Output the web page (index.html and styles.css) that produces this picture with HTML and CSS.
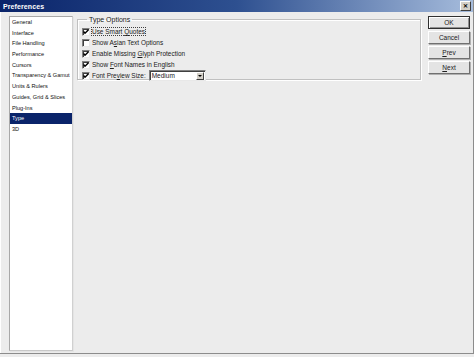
FILE: index.html
```html
<!DOCTYPE html>
<html lang="en">
<head>
    <meta charset="UTF-8">
    <title>Preferences</title>
    <link rel="stylesheet" href="styles.css">
</head>
<body>
    <div class="window">
        <div class="titlebar">
            <span class="title">Preferences</span>
            <span class="close">&#x2715;</span>
        </div>
        <div class="content">
            <ul class="nav">
                <li>General</li>
                <li>Interface</li>
                <li>File Handling</li>
                <li>Performance</li>
                <li>Cursors</li>
                <li>Transparency &amp; Gamut</li>
                <li>Units &amp; Rulers</li>
                <li>Guides, Grid &amp; Slices</li>
                <li>Plug-Ins</li>
                <li class="selected">Type</li>
                <li>3D</li>
            </ul>

            <fieldset class="group">
                <legend>Type Options</legend>
                <label class="check"><span class="box"><svg viewBox="0 0 6 6"><polyline points="0.5,2.5 2,4.2 5.5,0.8"/></svg></span><span class="focus">Use Smart <u>Q</u>uotes</span></label>
                <label class="check"><span class="box"></span><span>Show A<u>s</u>ian Text Options</span></label>
                <label class="check"><span class="box"><svg viewBox="0 0 6 6"><polyline points="0.5,2.5 2,4.2 5.5,0.8"/></svg></span><span>Enable Missing <u>G</u>lyph Protection</span></label>
                <label class="check"><span class="box"><svg viewBox="0 0 6 6"><polyline points="0.5,2.5 2,4.2 5.5,0.8"/></svg></span><span>Show <u>F</u>ont Names in English</span></label>
                <label class="check"><span class="box"><svg viewBox="0 0 6 6"><polyline points="0.5,2.5 2,4.2 5.5,0.8"/></svg></span><span>Font Pre<u>v</u>iew Size:</span>
                    <span class="select"><span class="value">Medium</span><span class="arrow"></span></span>
                </label>
            </fieldset>

            <div class="buttons">
                <button class="default">OK</button>
                <button>Cancel</button>
                <button><u>P</u>rev</button>
                <button><u>N</u>ext</button>
            </div>
        </div>
    </div>
</body>
</html>
```

FILE: styles.css
```css
html, body {
    margin: 0;
    padding: 0;
}
body {
    width: 474px;
    height: 357px;
    overflow: hidden;
    background: #ececec;
    font-family: "Liberation Sans", Arial, sans-serif;
    color: #000;
}
.window {
    height: 354px;
    border-bottom: 1px solid #8c8c8c;
    border-right: 1px solid #8c8c8c;
    box-sizing: border-box;
    display: flex;
    flex-direction: column;
}
.titlebar {
    height: 12px;
    background: linear-gradient(to right, #0a246a 0%, #2e5090 50%, #a6bcdc 100%);
    display: flex;
    align-items: center;
    justify-content: space-between;
    padding: 0 2px 0 3px;
}
.title {
    color: #fff;
    font-weight: bold;
    font-size: 7px;
    letter-spacing: 0.1px;
}
.close {
    width: 9px;
    height: 8px;
    background: #d4d0c8;
    border: 1px solid;
    border-color: #fff #404040 #404040 #fff;
    font-size: 6px;
    font-weight: bold;
    line-height: 8px;
    text-align: center;
    color: #000;
}
.content {
    flex: 1;
    display: flex;
    align-items: flex-start;
    padding: 4px 3px 0 8px;
    border-left: 1px solid #fff;
}
.nav {
    list-style: none;
    margin: 0;
    padding: 0;
    width: 64px;
    height: 335px;
    box-sizing: border-box;
    background: #fff;
    border: 1px solid #a8a8a8;
    border-right-color: #d0d0d0;
    border-bottom-color: #c8c8c8;
    box-shadow: 1px 1px 0 #e4e4e4;
}
.nav li {
    height: 10.7px;
    line-height: 10.7px;
    font-size: 5.6px;
    padding-left: 2px;
    white-space: nowrap;
    color: #101010;
}
.nav li.selected {
    background: #0a246a;
    color: #fff;
}
.group {
    margin: 0 0 0 4px;
    width: 344px;
    height: 64px;
    box-sizing: border-box;
    border: 1px solid #c0c0c0;
    box-shadow: inset 1px 1px 0 #fff, 1px 1px 0 #fff;
    padding: 3px 0 0 4px;
}
.group legend {
    font-size: 7px;
    padding: 0 2px;
    margin-left: 5px;
    color: #202020;
}
.check {
    display: flex;
    align-items: center;
    height: 11px;
    font-size: 6.45px;
    color: #202020;
    white-space: nowrap;
}
.box {
    width: 6px;
    height: 6px;
    background: #fff;
    border: 1px solid;
    border-color: #808080 #e8e8e8 #e8e8e8 #808080;
    box-shadow: inset 1px 1px 0 #404040;
    margin-right: 2px;
    flex-shrink: 0;
    display: flex;
}
.box svg {
    width: 6px;
    height: 6px;
}
.box polyline {
    fill: none;
    stroke: #000;
    stroke-width: 1.5;
}
.focus {
    outline: 1px dotted #404040;
    outline-offset: 0;
}
.select {
    display: flex;
    align-items: center;
    margin-left: 3px;
    width: 57px;
    height: 11px;
    box-sizing: border-box;
    background: #fff;
    border: 1px solid;
    border-color: #808080 #e8e8e8 #e8e8e8 #808080;
    box-shadow: inset 1px 1px 0 #404040;
}
.select .value {
    flex: 1;
    padding-left: 2px;
    font-size: 6.5px;
}
.select .arrow {
    width: 8px;
    height: 8px;
    margin-right: 1px;
    background: #d4d0c8;
    border: 1px solid;
    border-color: #fff #404040 #404040 #fff;
    box-sizing: border-box;
    position: relative;
}
.select .arrow::after {
    content: "";
    position: absolute;
    left: 1px;
    top: 2px;
    border-left: 2px solid transparent;
    border-right: 2px solid transparent;
    border-top: 2px solid #000;
}
.buttons {
    margin-left: auto;
    display: flex;
    flex-direction: column;
    gap: 2px;
}
.buttons button {
    width: 42px;
    height: 13px;
    padding: 0;
    font-family: "Liberation Sans", Arial, sans-serif;
    font-size: 6.5px;
    color: #202020;
    background: #e4e4e4;
    border: 1px solid;
    border-color: #fff #707070 #707070 #fff;
    box-shadow: 1px 1px 0 #b0b0b0;
}
.buttons button.default {
    border: 1px solid #303030;
    box-shadow: inset 1px 1px 0 #fff, inset -1px -1px 0 #909090;
}
```
